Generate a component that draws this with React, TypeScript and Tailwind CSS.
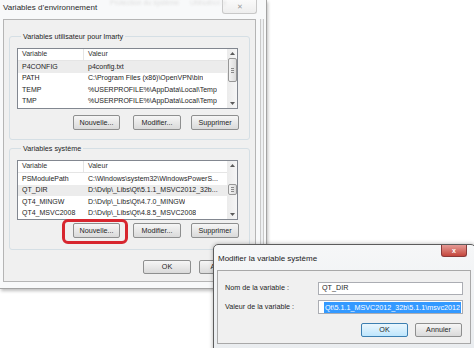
import React from 'react';

type Row = { name: string; value: string; selected?: boolean };

const userRows: Row[] = [
  { name: 'P4CONFIG', value: 'p4config.txt', selected: true },
  { name: 'PATH', value: 'C:\\Program Files (x86)\\OpenVPN\\bin' },
  { name: 'TEMP', value: '%USERPROFILE%\\AppData\\Local\\Temp' },
  { name: 'TMP', value: '%USERPROFILE%\\AppData\\Local\\Temp' },
];

const systemRows: Row[] = [
  { name: 'PSModulePath', value: 'C:\\Windows\\system32\\WindowsPowerS...' },
  { name: 'QT_DIR', value: 'D:\\Dvlp\\_Libs\\Qt\\5.1.1_MSVC2012_32b...', selected: true },
  { name: 'QT4_MINGW', value: 'D:\\Dvlp\\_Libs\\Qt\\4.7.0_MINGW' },
  { name: 'QT4_MSVC2008', value: 'D:\\Dvlp\\_Libs\\Qt\\4.8.5_MSVC2008' },
];

const Btn: React.FC<{ label: string; className?: string; primary?: boolean }> = ({ label, className = '', primary }) => (
  <div
    className={`flex items-center justify-center rounded-[2px] border text-[7.2px] leading-none ${
      primary
        ? 'border-[#3c7fb1] bg-linear-to-b from-[#eaf6fd] to-[#bee6fd]'
        : 'border-[#8e8f8f] bg-linear-to-b from-[#f6f6f6] to-[#dadada]'
    } ${className}`}
  >
    {label}
  </div>
);

const Arrow: React.FC<{ up?: boolean }> = ({ up }) => (
  <div className="flex h-[9px] items-center justify-center">
    <svg width="5" height="3" viewBox="0 0 5 3">
      <path d={up ? 'M0 3 L2.5 0 L5 3 Z' : 'M0 0 L2.5 3 L5 0 Z'} fill="#5a5a5a" />
    </svg>
  </div>
);

const ListBox: React.FC<{ rows: Row[]; heightClass: string; padClass: string; thumbClass: string }> = ({
  rows,
  heightClass,
  padClass,
  thumbClass,
}) => (
  <div className={`flex w-[221px] border border-[#828790] bg-white ${heightClass}`}>
    <div className="flex min-w-0 flex-1 flex-col">
      {/* header */}
      <div className="flex h-[12px] shrink-0 items-center border-b border-[#e5e5e5] text-[7px] text-[#333]">
        <div className="w-[66px] border-r border-[#e5e5e5] pl-[4px]">Variable</div>
        <div className="pl-[4px]">Valeur</div>
      </div>
      {rows.map((r) => (
        <div
          key={r.name}
          className={`flex h-[11.5px] shrink-0 items-center text-[7px] whitespace-nowrap ${r.selected ? 'bg-[#ececec]' : ''}`}
        >
          <div className="w-[66px] shrink-0 pl-[4px]">{r.name}</div>
          <div className="overflow-hidden pl-[4px]">{r.value}</div>
        </div>
      ))}
    </div>
    {/* scrollbar */}
    <div className="flex w-[10px] shrink-0 flex-col border-l border-[#ececec] bg-linear-to-r from-[#ececec] to-[#f6f6f6]">
      <Arrow up />
      <div className={`flex flex-1 flex-col items-center ${padClass}`}>
        <div
          className={`flex w-[9px] flex-col items-center justify-center gap-[1px] rounded-[2px] border border-[#979797] bg-linear-to-r from-[#f3f3f3] to-[#dcdcdc] ${thumbClass}`}
        >
          <div className="h-px w-[3px] bg-[#8a8a8a]" />
          <div className="h-px w-[3px] bg-[#8a8a8a]" />
          <div className="h-px w-[3px] bg-[#8a8a8a]" />
        </div>
      </div>
      <Arrow />
    </div>
  </div>
);

export default function App() {
  return (
    <div className="relative h-[348px] w-[474px] overflow-hidden bg-white font-['Liberation_Sans',Arial,sans-serif] text-[#1e1e1e]">
      {/* Main window: Variables d'environnement */}
      <div className="relative flex h-[289px] w-[267px] flex-col border-r border-b border-[#a3a3a3] bg-[#f8f9fa] shadow-[1px_2px_3px_rgba(0,0,0,0.25)]">
        {/* ghost text seen through the glass */}
        <div className="absolute top-[-2px] left-[110px] text-[7px] whitespace-nowrap text-[#dedede] blur-[0.8px]">
          Protection du système
        </div>
        <div className="absolute top-[-2px] left-[190px] text-[7px] whitespace-nowrap text-[#e2e2e2] blur-[0.8px]">
          Utilisation à
        </div>

        {/* title bar */}
        <div className="flex h-[19px] shrink-0 items-start">
          <div className="pt-[3px] pl-[3px] text-[8px] leading-[10px] text-[#2a2a2a]">Variables d’environnement</div>
          <div className="ml-auto mr-[9px] flex h-[14px] w-[35px] items-center justify-center rounded-b-[3px] border border-t-0 border-[#c8c8c8] bg-linear-to-b from-[#fafafa] to-[#eeeeee]">
            <span className="text-[7px] leading-none text-[#9a9a9a]">✕</span>
          </div>
        </div>

        <div className="flex flex-1">
          {/* content panel */}
          <div className="ml-[3px] mb-[6px] flex w-[253px] flex-col border border-[#b5b5b5] bg-[#f0f0f0]">
            {/* user variables */}
            <fieldset className="mt-[12px] ml-[5px] w-[241px] rounded-[3px] border border-[#d5dfe5] pb-[9px] pl-[7px]">
              <legend className="ml-[4px] px-[2px] text-[7.2px] leading-[9px]">Variables utilisateur pour lmarty</legend>
              <div className="mt-[7px]">
                <ListBox rows={userRows} heightClass="h-[61px]" padClass="pt-0" thumbClass="h-[24px]" />
              </div>
              <div className="mt-[6px] flex">
                <Btn label="Nouvelle..." className="ml-[56px] h-[15px] w-[47px]" />
                <Btn label="Modifier..." className="ml-[13px] h-[15px] w-[48px]" />
                <Btn label="Supprimer" className="ml-[10px] h-[15px] w-[48px]" />
              </div>
            </fieldset>

            {/* system variables */}
            <fieldset className="mt-[4px] ml-[5px] w-[241px] rounded-[3px] border border-[#d5dfe5] pb-[11px] pl-[7px]">
              <legend className="ml-[4px] px-[2px] text-[7.2px] leading-[9px]">Variables système</legend>
              <div className="mt-[7px]">
                <ListBox rows={systemRows} heightClass="h-[60px]" padClass="pt-[14px]" thumbClass="h-[11px]" />
              </div>
              <div className="mt-[3px] flex">
                <div className="relative ml-[56px]">
                  <Btn label="Nouvelle..." className="h-[15px] w-[47px]" />
                  <div className="absolute -top-[4px] -right-[8px] -bottom-[6px] -left-[11px] rounded-[6px] border-[3px] border-[#d7262f]" />
                </div>
                <Btn label="Modifier..." className="ml-[13px] h-[15px] w-[48px]" />
                <Btn label="Supprimer" className="ml-[10px] h-[15px] w-[48px]" />
              </div>
            </fieldset>

            {/* OK / Annuler */}
            <div className="mt-[10px] flex">
              <Btn label="OK" className="ml-[139px] h-[14px] w-[48px]" />
              <Btn label="Annuler" className="ml-[8px] h-[14px] w-[48px]" />
            </div>
          </div>

          {/* right frame */}
          <div className="ml-[1px] flex w-[9px] justify-center">
            <div className="h-full w-[4px] border-x border-[#c9c9c9] bg-[#eef0f2]" />
          </div>
        </div>
      </div>

      {/* Dialog: Modifier la variable système */}
      <div className="absolute top-[244px] left-[213px] flex h-[112px] w-[263px] flex-col rounded-t-[5px] border border-[#5c5c5c] bg-linear-to-b from-[#f6f7f8] to-[#e9ecef] shadow-[0_0_4px_rgba(0,0,0,0.3)]">
        <div className="flex h-[25px] shrink-0 items-start">
          <div className="pt-[9px] pl-[4px] text-[8px] leading-[10px] text-[#222]">Modifier la variable système</div>
          <div className="mr-[8px] ml-auto flex h-[12px] w-[26px] items-center justify-center rounded-b-[3px] border border-t-0 border-[#8a3a3a] bg-linear-to-b from-[#e49a96] to-[#c4453c]">
            <span className="text-[7px] leading-none font-bold text-white">x</span>
          </div>
        </div>
        <div className="ml-[3px] flex h-[74px] w-[254px] flex-col border border-[#a8a8a8] bg-[#f0f0f0]">
          <div className="mt-[11px] flex items-center">
            <div className="w-[100px] pl-[7px] text-[7.2px]">Nom de la variable :</div>
            <div className="flex h-[13px] w-[145px] items-center border border-[#abadb3] bg-white pl-[3px] text-[7.2px]">
              QT_DIR
            </div>
          </div>
          <div className="mt-[5px] flex items-center">
            <div className="w-[100px] pl-[7px] text-[7.2px]">Valeur de la variable :</div>
            <div className="flex h-[14px] w-[145px] items-center justify-end overflow-hidden border border-[#abadb3] bg-white pr-[1px] text-[7.2px] whitespace-nowrap">
              <span className="bg-[#3399ff] px-px leading-[11px] text-white">Qt\5.1.1_MSVC2012_32b\5.1.1\msvc2012</span>
            </div>
          </div>
          <div className="mt-[9px] flex">
            <Btn label="OK" primary className="ml-[143px] h-[14px] w-[47px]" />
            <Btn label="Annuler" className="ml-[7px] h-[14px] w-[47px]" />
          </div>
        </div>
      </div>
    </div>
  );
}
